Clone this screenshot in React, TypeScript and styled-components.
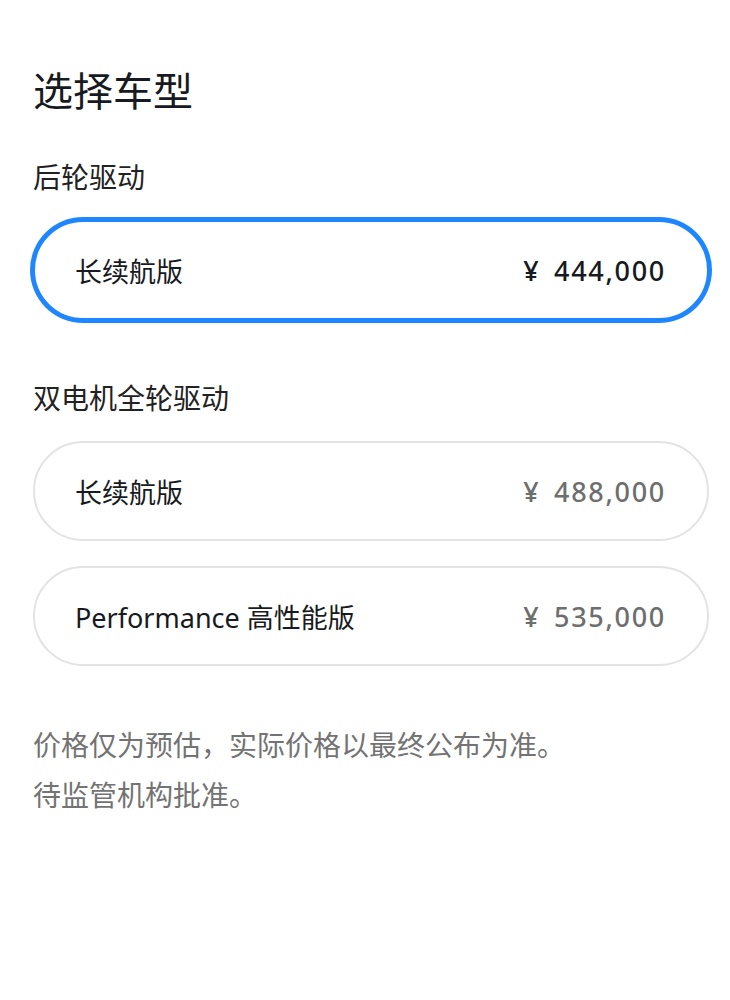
import React from "react";
import styled, { createGlobalStyle } from "styled-components";

const Global = createGlobalStyle`
  html, body { margin: 0; padding: 0; background: #ffffff; }
  body {
    font-family: "Noto Sans", "Noto Sans CJK SC", sans-serif;
    color: #171a20;
  }
`;

const Page = styled.main`
  display: flex;
  flex-direction: column;
  padding: 64px 21px 0 33px;
`;

const Title = styled.h1`
  margin: 0;
  font-family: "Noto Sans CJK SC", sans-serif;
  font-weight: 400;
  font-size: 40px;
  line-height: 50px;
  color: #171a20;
`;

const Section = styled.section<{ $top: number }>`
  display: flex;
  flex-direction: column;
  gap: 25px;
  margin-top: ${(p) => p.$top}px;
`;

const SectionLabel = styled.h2`
  margin: 0 0 1px;
  font-family: "Noto Sans CJK SC", sans-serif;
  font-weight: 400;
  font-size: 28px;
  line-height: 36px;
  color: #222222;
`;

const Card = styled.div<{ $selected?: boolean }>`
  box-sizing: border-box;
  height: 100px;
  display: flex;
  align-items: center;
  justify-content: space-between;
  padding: 0 41px 0 40px;
  border-radius: 50px;
  border: 2px solid ${(p) => (p.$selected ? "#1e86ff" : "#e3e3e3")};
  box-shadow: ${(p) => (p.$selected ? "0 0 0 3px #1e86ff" : "none")};
  background: #ffffff;
`;

const Name = styled.span`
  font-family: "Noto Sans", "Noto Sans CJK SC", sans-serif;
  font-size: 27px;
  color: #171a20;
`;

const Price = styled.span<{ $selected?: boolean }>`
  font-family: "Noto Sans", sans-serif;
  font-size: 27px;
  font-weight: 500;
  letter-spacing: 1.7px;
  word-spacing: 5px;
  color: ${(p) => (p.$selected ? "#171a20" : "#6e6e6e")};
`;

const Note = styled.p`
  margin: 53px 0 0;
  font-family: "Noto Sans CJK SC", sans-serif;
  font-size: 28px;
  line-height: 50px;
  color: #737373;
`;

export default function App() {
  return (
    <>
      <Global />
      <Page>
        <Title>选择车型</Title>
        <Section $top={44}>
          <SectionLabel>后轮驱动</SectionLabel>
          <Card $selected>
            <Name>长续航版</Name>
            <Price $selected>¥ 444,000</Price>
          </Card>
        </Section>
        <Section $top={59}>
          <SectionLabel>双电机全轮驱动</SectionLabel>
          <Card>
            <Name>长续航版</Name>
            <Price>¥ 488,000</Price>
          </Card>
          <Card>
            <Name>Performance 高性能版</Name>
            <Price>¥ 535,000</Price>
          </Card>
        </Section>
        <Note>
          价格仅为预估，实际价格以最终公布为准。
          <br />
          待监管机构批准。
        </Note>
      </Page>
    </>
  );
}
